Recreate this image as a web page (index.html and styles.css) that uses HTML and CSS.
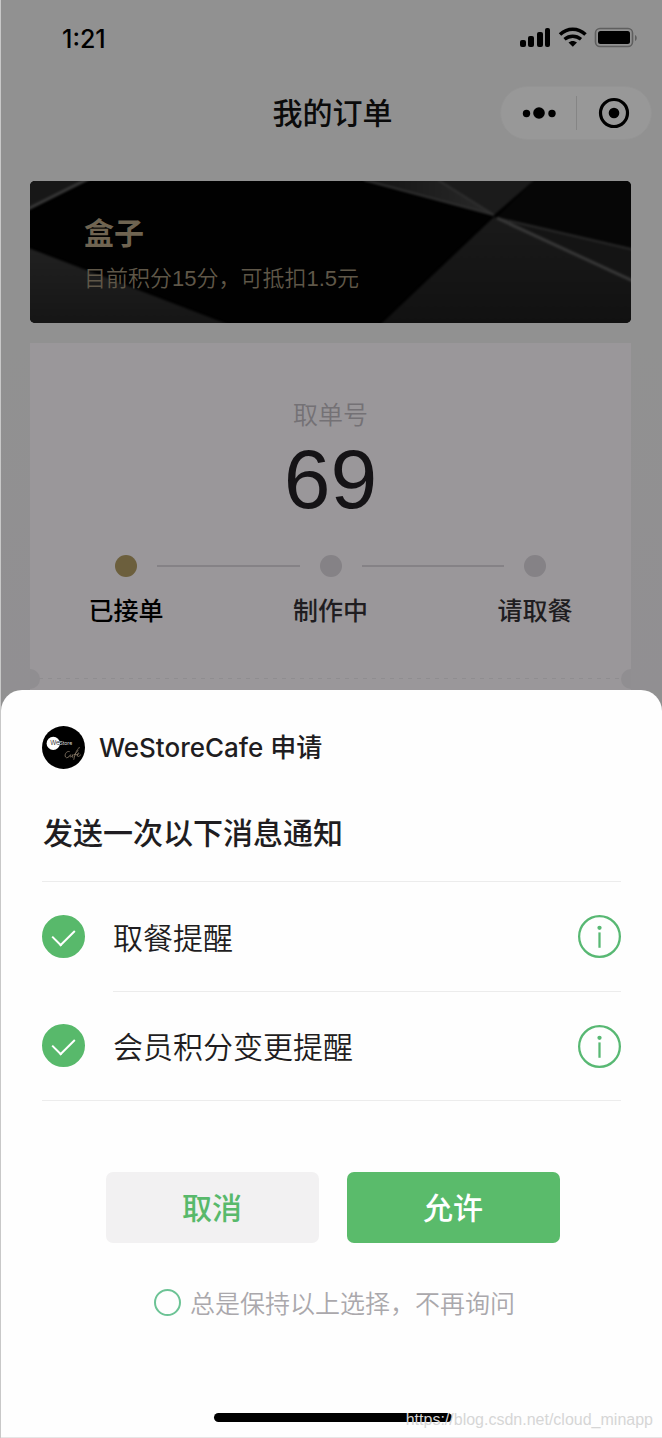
FILE: index.html
```html
<!DOCTYPE html>
<html lang="zh-CN">
<head>
<meta charset="utf-8">
<meta name="viewport" content="width=device-width, initial-scale=1">
<title>我的订单</title>
<link rel="stylesheet" href="styles.css">
</head>
<body>
<div class="phone">
  <main class="orders">
    <div class="status-bar">
      <span class="time">1:21</span>
      <svg class="status-icons" width="120" height="22" viewBox="0 0 120 22" aria-hidden="true">
        <rect x="1" y="13" width="6" height="7" rx="2"/>
        <rect x="9" y="9" width="6" height="11" rx="2"/>
        <rect x="18" y="5" width="6" height="15" rx="2"/>
        <rect x="26" y="1" width="5" height="19" rx="2"/>
        <path d="M41 7.500C48.500 0.500 59 0.500 66.500 7.500" fill="none" stroke="#000" stroke-width="3.600"/>
        <path d="M45.500 12.300C50.500 8.200 57 8.200 62 12.300" fill="none" stroke="#000" stroke-width="3.400"/>
        <path d="M49.500 15.600C52 13.500 55.500 13.500 58 15.600L53.800 19.800Z"/>
        <rect x="76.500" y="1.500" width="37" height="18" rx="4.500" fill="none" stroke="#5f5f5f" stroke-width="1.600"/>
        <rect x="79" y="4" width="32" height="13" rx="2.500"/>
        <path d="M116 8C118.300 9 118.300 13 116 14Z" fill="#5f5f5f"/>
      </svg>
    </div>
    <header class="nav">
      <h1>我的订单</h1>
      <div class="capsule">
        <button type="button" aria-label="更多">
          <svg width="36" height="16" viewBox="0 0 36 16"><circle cx="5.500" cy="8.500" r="3.700"/><circle cx="18" cy="8" r="5.800"/><circle cx="31" cy="8.500" r="3.700"/></svg>
        </button>
        <button type="button" aria-label="关闭">
          <svg width="32" height="32" viewBox="0 0 32 32"><circle cx="16" cy="16" r="13.500" fill="none" stroke="#000" stroke-width="3.200"/><circle cx="16" cy="16" r="5.300"/></svg>
        </button>
      </div>
    </header>

    <section class="member">
      <svg class="member-art" viewBox="0 0 601 142" preserveAspectRatio="none" aria-hidden="true">
        <defs>
          <linearGradient id="low" x1="0" y1="0" x2="0" y2="1"><stop offset="0" stop-color="#212121"/><stop offset="1" stop-color="#151515"/></linearGradient>
          <linearGradient id="facet" x1="0" y1="0" x2="0" y2="1"><stop offset="0" stop-color="#1a1a1a"/><stop offset="1" stop-color="#111111"/></linearGradient>
          <linearGradient id="blade" x1="0" y1="0" x2="1" y2="0"><stop offset="0" stop-color="#141414"/><stop offset="1" stop-color="#292929"/></linearGradient>
          <filter id="soft" color-interpolation-filters="sRGB"><feGaussianBlur stdDeviation="1.200"/></filter>
        </defs>
        <rect width="601" height="142" fill="#010101"/>
        <g filter="url(#soft)">
          <path d="M-4 -4H62L-4 29Z" fill="#171717"/>
          <path d="M-4 29L62 -4" stroke="#383838" stroke-width="3"/>
          <path d="M-4 66L205 146H-4Z" fill="url(#low)"/>
          <path d="M345 -4H508L464 34Z" fill="#1b1b1b"/>
          <path d="M334 -1H408L464 34Z" fill="url(#blade)"/>
          <path d="M334 -1L464 34M408 -1L464 34" stroke="#303030" stroke-width="2"/>
          <path d="M508 -4H605V68L467 36Z" fill="#060606"/>
          <path d="M464 36L605 69V146H348Z" fill="url(#facet)"/>
          <path d="M467 37L605 68V100Z" fill="#141414"/>
          <path d="M467 37L605 69" stroke="#292929" stroke-width="2"/>
          <path d="M467 37L605 101" stroke="#373737" stroke-width="3"/>
        </g>
      </svg>
      <div class="member-text">
        <h2>盒子</h2>
        <p>目前积分15分，可抵扣1.5元</p>
      </div>
    </section>

    <section class="ticket">
      <p class="ticket-label">取单号</p>
      <p class="ticket-number">69</p>
      <ol class="steps">
        <li class="step step-done">已接单</li>
        <li class="step-line" aria-hidden="true"></li>
        <li class="step">制作中</li>
        <li class="step-line" aria-hidden="true"></li>
        <li class="step">请取餐</li>
      </ol>
      <div class="tear"></div>
    </section>
  </main>

  <section class="sheet" role="dialog" aria-labelledby="ask">
    <header class="app">
      <svg class="app-logo" viewBox="0 0 42 42" aria-hidden="true">
        <circle cx="21" cy="21" r="21" fill="#000"/>
        <circle cx="11" cy="17" r="6.500" fill="#fff"/>
        <text x="8" y="19" class="logo-we">We</text>
        <text x="17" y="19" class="logo-store">Store</text>
        <path d="M27 25C23 24 21 30 24 31C26 31 27 29 28 28C26 31 29 31 30 28V31M31 33C32 28 34 23 35 23C36 24 32 28 31 28H35M34 29C37 27 36 25 35 27C34 30 35 31 38 28M35 22L37 21" fill="none" stroke="#8b7c69" stroke-width=".8"/>
      </svg>
      <span>WeStoreCafe 申请</span>
    </header>
    <h2 class="ask" id="ask">发送一次以下消息通知</h2>
    <ul class="topics">
      <li class="topic">
        <input class="tick" type="checkbox" id="meal" checked>
        <div class="topic-body">
          <label for="meal">取餐提醒</label>
          <button class="info" type="button" aria-label="取餐提醒说明">
            <svg width="43" height="43" viewBox="0 0 42 42"><circle cx="21" cy="21" r="19.900" fill="none" stroke="#58b873" stroke-width="2.200"/><circle cx="21" cy="12.500" r="2.100"/><rect x="19.900" y="17" width="2.200" height="15"/></svg>
          </button>
        </div>
      </li>
      <li class="topic">
        <input class="tick" type="checkbox" id="points" checked>
        <div class="topic-body">
          <label for="points">会员积分变更提醒</label>
          <button class="info" type="button" aria-label="会员积分变更提醒说明">
            <svg width="43" height="43" viewBox="0 0 42 42"><circle cx="21" cy="21" r="19.900" fill="none" stroke="#58b873" stroke-width="2.200"/><circle cx="21" cy="12.500" r="2.100"/><rect x="19.900" y="17" width="2.200" height="15"/></svg>
          </button>
        </div>
      </li>
    </ul>
    <div class="actions">
      <button class="btn btn-cancel" type="button">取消</button>
      <button class="btn btn-allow" type="button">允许</button>
    </div>
    <label class="always"><input type="checkbox">总是保持以上选择，不再询问</label>
    <footer class="bottom">
      <div class="home-bar"></div>
      <span class="watermark">https://blog.csdn.net/cloud_minapp</span>
    </footer>
  </section>
</div>
</body>
</html>
```
FILE: styles.css
```css
* { box-sizing: border-box; margin: 0; padding: 0; }

body {
  font-family: "Noto Sans CJK SC", sans-serif;
  background: #919191;
  color: #1f1d21;
}

ul, ol { list-style: none; }
h1, h2 { font-weight: 500; }
button { border: 0; background: none; font: inherit; cursor: pointer; }
input { appearance: none; flex: none; cursor: pointer; }
svg { display: block; }

.phone {
  min-height: 100vh;
  display: flex;
  flex-direction: column;
  border-left: 1px solid #c8c8c8;
}

.orders { background: linear-gradient(#919191 50%, #918f92); }

/* status bar and navigation */
.status-bar {
  display: flex;
  justify-content: space-between;
  align-items: center;
  height: 76px;
  padding: 0 23px 0 61px;
}
.time { padding-top: 2px; font: 500 25px/30px Inter, sans-serif; color: #000; }

.nav {
  display: grid;
  grid-template-columns: 1fr auto 1fr;
  align-items: center;
  padding: 10px 10px 0;
}
.nav h1 { grid-column: 2; padding: 0 0 4px 2px; font-size: 30px; line-height: 50px; color: #0b0b0b; }
.capsule {
  justify-self: end;
  display: flex;
  width: 152px;
  height: 54px;
  border-radius: 27px;
  background: #989898;
  border: 1px solid #949494;
}
.capsule button { flex: 1; display: grid; place-items: center; }
.capsule button + button { position: relative; }
.capsule button + button::before {
  content: "";
  position: absolute;
  left: 0;
  top: 9px;
  width: 1px;
  height: 34px;
  background: #858585;
}

/* member card */
.member {
  position: relative;
  margin: 41px 31px 0 29px;
  border-radius: 5px;
  overflow: hidden;
  color: #6f6451;
}
.member-art { position: absolute; inset: 0; width: 100%; height: 100%; }
.member-text { position: relative; padding: 28px 54px 24px; }
.member h2 { font-size: 30px; line-height: 44px; font-weight: 700; }
.member p {
  padding-top: 6px;
  font: 350 22px/40px "Liberation Sans", "Noto Sans CJK SC", sans-serif;
  color: #5f5748;
}

/* pick-up ticket */
.ticket {
  margin: 20px 31px 0 29px;
  padding-top: 52px;
  background: #9a979a;
  text-align: center;
}
.ticket-label { font-size: 25px; line-height: 36px; font-weight: 350; color: #747175; }
.ticket-number { font: 84px/96px "Liberation Sans", sans-serif; color: #151316; }

.steps {
  display: grid;
  grid-template-columns: 76px 1fr 76px 1fr 76px;
  padding: 28px 58px 0;
}
.step {
  display: grid;
  justify-items: center;
  gap: 14px;
  white-space: nowrap;
  font-size: 25px;
  line-height: 36px;
  font-weight: 500;
}
.step::before { content: ""; width: 22px; height: 22px; border-radius: 50%; background: #858286; }
.step-done { color: #000; }
.step-done::before { background: #6c5f3d; }
.step-line { height: 2px; margin: 10px -7px 0; background: #858286; }

.tear {
  display: flex;
  align-items: center;
  justify-content: space-between;
  height: 22px;
  margin-top: 41px;
  overflow: hidden;
  background: linear-gradient(90deg, #8f8d90 50%, transparent 50%) 0 10px / 9px 1px repeat-x;
}
.tear::before, .tear::after { content: ""; width: 10px; height: 20px; background: #908e91; }
.tear::before { border-radius: 0 10px 10px 0; }
.tear::after { border-radius: 10px 0 0 10px; }

/* permission sheet */
.sheet {
  flex: 1;
  display: flex;
  flex-direction: column;
  padding: 36px 41px 0;
  border-radius: 21px 21px 0 0;
  border-bottom: 1px solid #e6e6e6;
  background: #fefefe;
}
.app {
  display: flex;
  align-items: center;
  gap: 14px;
  font: 500 26px/43px Inter, "Noto Sans CJK SC", sans-serif;
}
.app-logo { width: 43px; height: 43px; }
.logo-we { font: 6px Inter, sans-serif; fill: #333; }
.logo-store { font: 5px Inter, sans-serif; fill: #ddd; }
.ask { margin-top: 40px; padding-left: 1px; font-size: 30px; line-height: 44px; }

.topics { margin-top: 28px; border-top: 1px solid #ececec; border-bottom: 1px solid #ececec; }
.topic { display: flex; align-items: center; gap: 28px; }
.topic-body {
  flex: 1;
  display: flex;
  align-items: center;
  justify-content: space-between;
  height: 109px;
}
.topic + .topic .topic-body { border-top: 1px solid #ececec; }
.topic label { padding-bottom: 2px; font-size: 30px; line-height: 44px; font-weight: 350; }
.tick {
  display: grid;
  place-content: center;
  width: 43px;
  height: 43px;
  border-radius: 50%;
  border: 2px solid #58b96b;
}
.tick:checked { background: #58b96b; }
.tick:checked::after {
  content: "";
  width: 11px;
  height: 19px;
  margin-bottom: 5px;
  border: solid #fff;
  border-width: 0 2px 2px 0;
  transform: rotate(45deg);
}
.info svg { fill: #58b873; }

.actions { display: flex; justify-content: center; gap: 28px; margin-top: 71px; padding-left: 2px; }
.btn { width: 213px; height: 71px; padding-bottom: 3px; border-radius: 7px; font-size: 30px; font-weight: 500; }
.btn-cancel { background: #f2f1f2; color: #58b96b; }
.btn-allow { background: #5abb6b; color: #fff; }

.always {
  display: flex;
  align-items: center;
  justify-content: center;
  gap: 9px;
  margin-top: 41px;
  padding-left: 6px;
  font-size: 25px;
  line-height: 36px;
  font-weight: 350;
  color: #aaa8ac;
}
.always input { width: 27px; height: 27px; border: 2px solid #6cc395; border-radius: 50%; }
.always input:checked { background: #58b96b; }

.bottom { position: relative; margin: auto -41px 0; padding: 0 0 15px 3px; }
.home-bar { width: 238px; height: 9px; margin: 0 auto; border-radius: 5px; background: #000; }
.watermark {
  position: absolute;
  right: 9px;
  bottom: 7px;
  font: 16px/20px "Liberation Sans", sans-serif;
  color: #d6d6d6;
}
```
